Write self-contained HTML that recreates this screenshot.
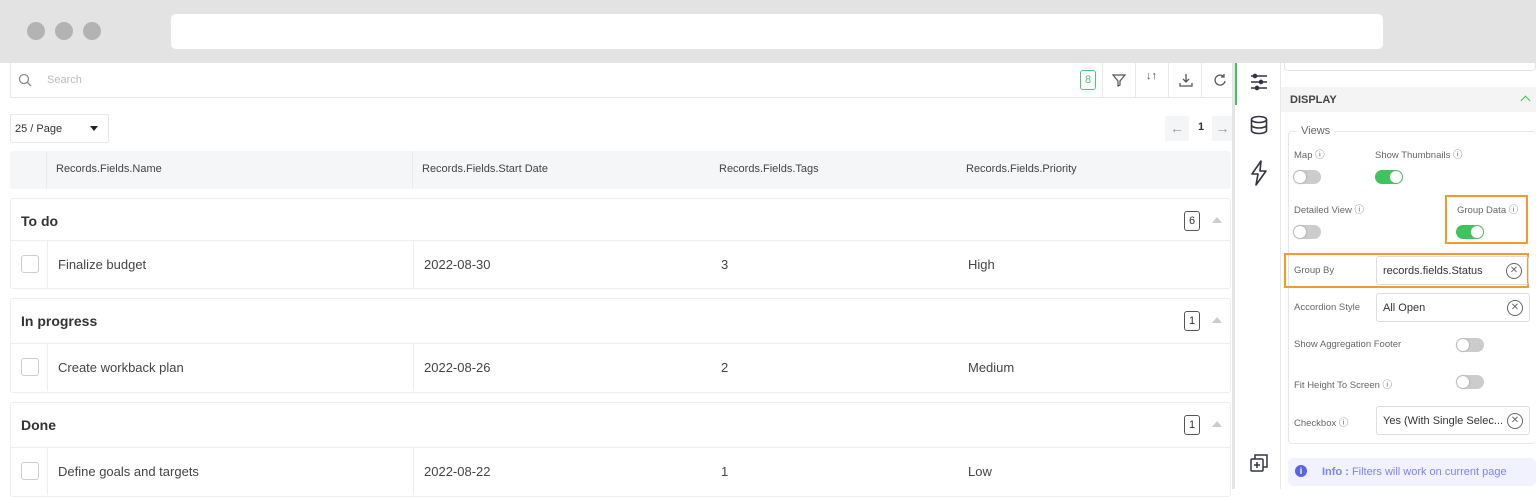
<!DOCTYPE html>
<html><head><style>
*{box-sizing:border-box;margin:0;padding:0}
body{width:1536px;height:489px;overflow:hidden;background:#fff;font-family:"Liberation Sans",sans-serif;position:relative;color:#333}
.a{position:absolute}
.chrome{left:0;top:0;width:1536px;height:63px;background:#e3e3e3}
.dot{width:18px;height:18px;border-radius:50%;background:#b3b3b3;top:22px}
.addr{left:171px;top:14px;width:1212px;height:35px;background:#fff;border-radius:5px}
.grp{left:10px;width:1221px;border:1px solid #eee;border-radius:3px}
.gh{height:42px;border-bottom:1px solid #eee;font-size:14px;font-weight:bold;color:#333;padding:14px 10px}
.row{height:47px;font-size:13px;color:#444;position:relative}
.row span{position:absolute;top:16px}
.cb{position:absolute;left:10px;top:14px;width:18px;height:18px;border:1px solid #ccc;border-radius:3px}
.cnt{position:absolute;right:30px;top:12px;width:16px;height:20px;border:1px solid #555;border-radius:3px;font-size:11px;font-weight:normal;text-align:center;line-height:18px}
.up{position:absolute;right:8px;top:18px;width:0;height:0;border-left:5px solid transparent;border-right:5px solid transparent;border-bottom:6px solid #ccc}
.lbl{font-size:9.5px;color:#666}
.tg{width:28px;height:14px;border-radius:7px;background:#ccc}
.tg::after{content:"";position:absolute;left:1px;top:1px;width:12px;height:12px;border-radius:50%;background:#fff;box-shadow:0 0 2px #999}
.tg.on{background:#3ec45c}.tg.on::after{left:15px}
.sel{border:1px solid #ddd;border-radius:3px;height:29px;font-size:11px;color:#333;padding:8px 6px}
.x{position:absolute;right:6px;top:6px;width:16px;height:16px;border:1px solid #666;border-radius:50%;font-size:10px;text-align:center;line-height:14px;color:#666}
</style></head><body>
<div class="a chrome"></div>
<div class="a dot" style="left:27px"></div><div class="a dot" style="left:55px"></div><div class="a dot" style="left:83px"></div>
<div class="a addr"></div>

<!-- search bar -->
<div class="a" style="left:10px;top:63px;width:1223px;height:35px;border:1px solid #e8e8e8;border-top:none"></div>
<svg class="a" style="left:18px;top:73px" width="14" height="14" viewBox="0 0 14 14"><circle cx="6" cy="6" r="4.5" fill="none" stroke="#888" stroke-width="1.3"/><path d="M9.5 9.5 13 13" stroke="#888" stroke-width="1.3"/></svg>
<div class="a" style="left:47px;top:74px;font-size:11px;color:#bbb">Search</div>
<div class="a" style="left:1080px;top:70px;width:16px;height:20px;border:1px solid #4cc776;border-radius:3px;font-size:11px;color:#4cc776;text-align:center;line-height:18px">8</div>
<div class="a" style="left:1102px;top:63px;width:1px;height:35px;background:#e8e8e8"></div>
<div class="a" style="left:1135px;top:63px;width:1px;height:35px;background:#e8e8e8"></div>
<div class="a" style="left:1168px;top:63px;width:1px;height:35px;background:#e8e8e8"></div>
<div class="a" style="left:1201px;top:63px;width:1px;height:35px;background:#e8e8e8"></div>
<svg class="a" style="left:1111px;top:72px" width="16" height="16" viewBox="0 0 16 16"><path d="M2 3h12l-5 6v4l-2 1V9z" fill="none" stroke="#555" stroke-width="1.2"/></svg>
<div class="a" style="left:1146px;top:70px;font-size:11px;color:#555">↓↑</div>
<svg class="a" style="left:1178px;top:72px" width="16" height="16" viewBox="0 0 16 16"><path d="M8 2v8M5 7l3 3 3-3M2 11v3h12v-3" fill="none" stroke="#555" stroke-width="1.3"/></svg>
<svg class="a" style="left:1212px;top:72px" width="16" height="16" viewBox="0 0 16 16"><path d="M12 5a5 5 0 1 0 1 4M12 2v3h-3" fill="none" stroke="#555" stroke-width="1.3"/></svg>

<!-- per page -->
<div class="a" style="left:10px;top:114px;width:99px;height:29px;border:1px solid #e8e8e8;border-radius:2px;font-size:11px;padding:8px 4px;color:#333">25 / Page</div>
<div class="a" style="left:90px;top:126px;border-left:4px solid transparent;border-right:4px solid transparent;border-top:5px solid #222"></div>
<div class="a" style="left:1165px;top:116px;width:24px;height:25px;background:#f4f5f7;border-radius:2px;color:#999;font-size:14px;text-align:center;line-height:24px">←</div>
<div class="a" style="left:1198px;top:121px;font-size:11px;font-weight:bold;color:#333">1</div>
<div class="a" style="left:1212px;top:116px;width:21px;height:25px;background:#f4f5f7;border-radius:2px;color:#999;font-size:14px;text-align:center;line-height:24px">→</div>

<!-- header -->
<div class="a" style="left:10px;top:151px;width:1221px;height:38px;background:#f4f6f8;border-radius:3px;font-size:11px;color:#444">
<div class="a" style="left:36px;top:0;width:1px;height:38px;background:#e8eaec"></div>
<span class="a" style="left:46px;top:12px">Records.Fields.Name</span>
<div class="a" style="left:402px;top:0;width:1px;height:38px;background:#e8eaec"></div>
<span class="a" style="left:412px;top:12px">Records.Fields.Start Date</span>
<span class="a" style="left:709px;top:12px">Records.Fields.Tags</span>
<span class="a" style="left:956px;top:12px">Records.Fields.Priority</span>
</div>

<div class="a grp" style="top:198px;height:91px"><div class="gh" style="position:relative">To do<div class="cnt">6</div><div class="up"></div></div>
<div class="row"><div class="cb"></div><div class="a" style="left:36px;top:0;width:1px;height:47px;background:#eee"></div><span style="left:47px">Finalize budget</span><div class="a" style="left:402px;top:0;width:1px;height:47px;background:#eee"></div><span style="left:413px">2022-08-30</span><span style="left:710px">3</span><span style="left:957px">High</span></div></div>

<div class="a grp" style="top:298px;height:95px"><div class="gh" style="position:relative;height:45px">In progress<div class="cnt">1</div><div class="up"></div></div>
<div class="row"><div class="cb"></div><div class="a" style="left:36px;top:0;width:1px;height:47px;background:#eee"></div><span style="left:47px">Create workback plan</span><div class="a" style="left:402px;top:0;width:1px;height:47px;background:#eee"></div><span style="left:413px">2022-08-26</span><span style="left:710px">2</span><span style="left:957px">Medium</span></div></div>

<div class="a grp" style="top:402px;height:95px"><div class="gh" style="position:relative;height:45px">Done<div class="cnt">1</div><div class="up"></div></div>
<div class="row"><div class="cb"></div><div class="a" style="left:36px;top:0;width:1px;height:47px;background:#eee"></div><span style="left:47px">Define goals and targets</span><div class="a" style="left:402px;top:0;width:1px;height:47px;background:#eee"></div><span style="left:413px">2022-08-22</span><span style="left:710px">1</span><span style="left:957px">Low</span></div></div>

<!-- divider & icon bar -->
<div class="a" style="left:1232px;top:63px;width:3px;height:426px;background:#e6e6e6"></div>
<div class="a" style="left:1235px;top:63px;width:2px;height:42px;background:#3ec45c"></div>
<div class="a" style="left:1280px;top:63px;width:1px;height:426px;background:#e8e8e8"></div>
<svg class="a" style="left:1249px;top:72px" width="20" height="20" viewBox="0 0 20 20" stroke="#334" stroke-width="1.5" fill="#334"><path d="M2 4h16M2 10h16M2 16h16" fill="none"/><circle cx="6" cy="4" r="1.6"/><circle cx="12" cy="10" r="1.6"/><circle cx="8" cy="16" r="1.6"/></svg>
<svg class="a" style="left:1249px;top:115px" width="20" height="20" viewBox="0 0 20 20" fill="none" stroke="#334" stroke-width="1.6"><ellipse cx="10" cy="4.5" rx="7.5" ry="3"/><path d="M2.5 4.5v11c0 1.7 3.4 3 7.5 3s7.5-1.3 7.5-3v-11M2.5 10c0 1.7 3.4 3 7.5 3s7.5-1.3 7.5-3"/></svg>
<svg class="a" style="left:1249px;top:160px" width="20" height="26" viewBox="0 0 20 26" fill="none" stroke="#334" stroke-width="1.6" stroke-linejoin="round"><path d="M12 1 3 14h6l-2 11 10-14h-6z"/></svg>
<svg class="a" style="left:1249px;top:453px" width="20" height="20" viewBox="0 0 20 20" fill="none" stroke="#334" stroke-width="1.5"><rect x="2" y="6" width="12" height="12" rx="1"/><path d="M6 6V2h12v12h-4M8 9v6M5 12h6"/></svg>

<!-- right panel -->
<div class="a" style="left:1284px;top:63px;width:252px;height:8px;border:1px solid #e5e5e5;border-top:none;border-radius:0 0 4px 4px"></div>
<div class="a" style="left:1281px;top:87px;width:255px;height:25px;background:#f4f4f4;font-size:11px;font-weight:bold;color:#444;padding:7px 9px">DISPLAY</div>
<div class="a" style="left:1522px;top:97px;width:7px;height:7px;border-left:1.3px solid #3ec45c;border-top:1.3px solid #3ec45c;transform:rotate(45deg)"></div>
<div class="a" style="left:1288px;top:131px;width:248px;height:313px;border:1px solid #e6e6e6;border-right:none;border-radius:4px"></div>
<div class="a" style="left:1297px;top:125px;background:#fff;padding:0 4px;font-size:11px;color:#666">Views</div>
<div class="a lbl" style="left:1294px;top:147px">Map ⓘ</div>
<div class="a lbl" style="left:1375px;top:147px">Show Thumbnails ⓘ</div>
<div class="a tg" style="left:1293px;top:170px"></div>
<div class="a tg on" style="left:1375px;top:170px"></div>
<div class="a lbl" style="left:1294px;top:202px">Detailed View ⓘ</div>
<div class="a" style="left:1445px;top:195px;width:83px;height:49px;border:2px solid #f39a2c"></div>
<div class="a lbl" style="left:1457px;top:202px">Group Data ⓘ</div>
<div class="a tg" style="left:1293px;top:225px"></div>
<div class="a tg on" style="left:1456px;top:225px"></div>
<div class="a" style="left:1284px;top:253px;width:245px;height:35px;border:2px solid #f39a2c"></div>
<div class="a lbl" style="left:1294px;top:265px">Group By</div>
<div class="a sel" style="left:1376px;top:256px;width:153px">records.fields.Status<div class="x">✕</div></div>
<div class="a lbl" style="left:1294px;top:302px">Accordion Style</div>
<div class="a sel" style="left:1376px;top:293px;width:154px">All Open<div class="x">✕</div></div>
<div class="a lbl" style="left:1294px;top:339px">Show Aggregation Footer</div>
<div class="a tg" style="left:1456px;top:338px"></div>
<div class="a lbl" style="left:1294px;top:377px">Fit Height To Screen ⓘ</div>
<div class="a tg" style="left:1456px;top:375px"></div>
<div class="a lbl" style="left:1294px;top:415px">Checkbox ⓘ</div>
<div class="a sel" style="left:1376px;top:406px;width:154px">Yes (With Single Selec...<div class="x">✕</div></div>
<div class="a" style="left:1288px;top:458px;width:248px;height:28px;background:#f2f2fe;border-radius:5px"></div>
<div class="a" style="left:1295px;top:465px;width:12px;height:12px;border-radius:50%;background:#5b63e8;color:#fff;font-size:9px;text-align:center;line-height:12px;font-weight:bold">i</div>
<div class="a" style="left:1322px;top:466px;font-size:11px;color:#7c84ef"><b>Info :</b> Filters will work on current page</div>
</body></html>
